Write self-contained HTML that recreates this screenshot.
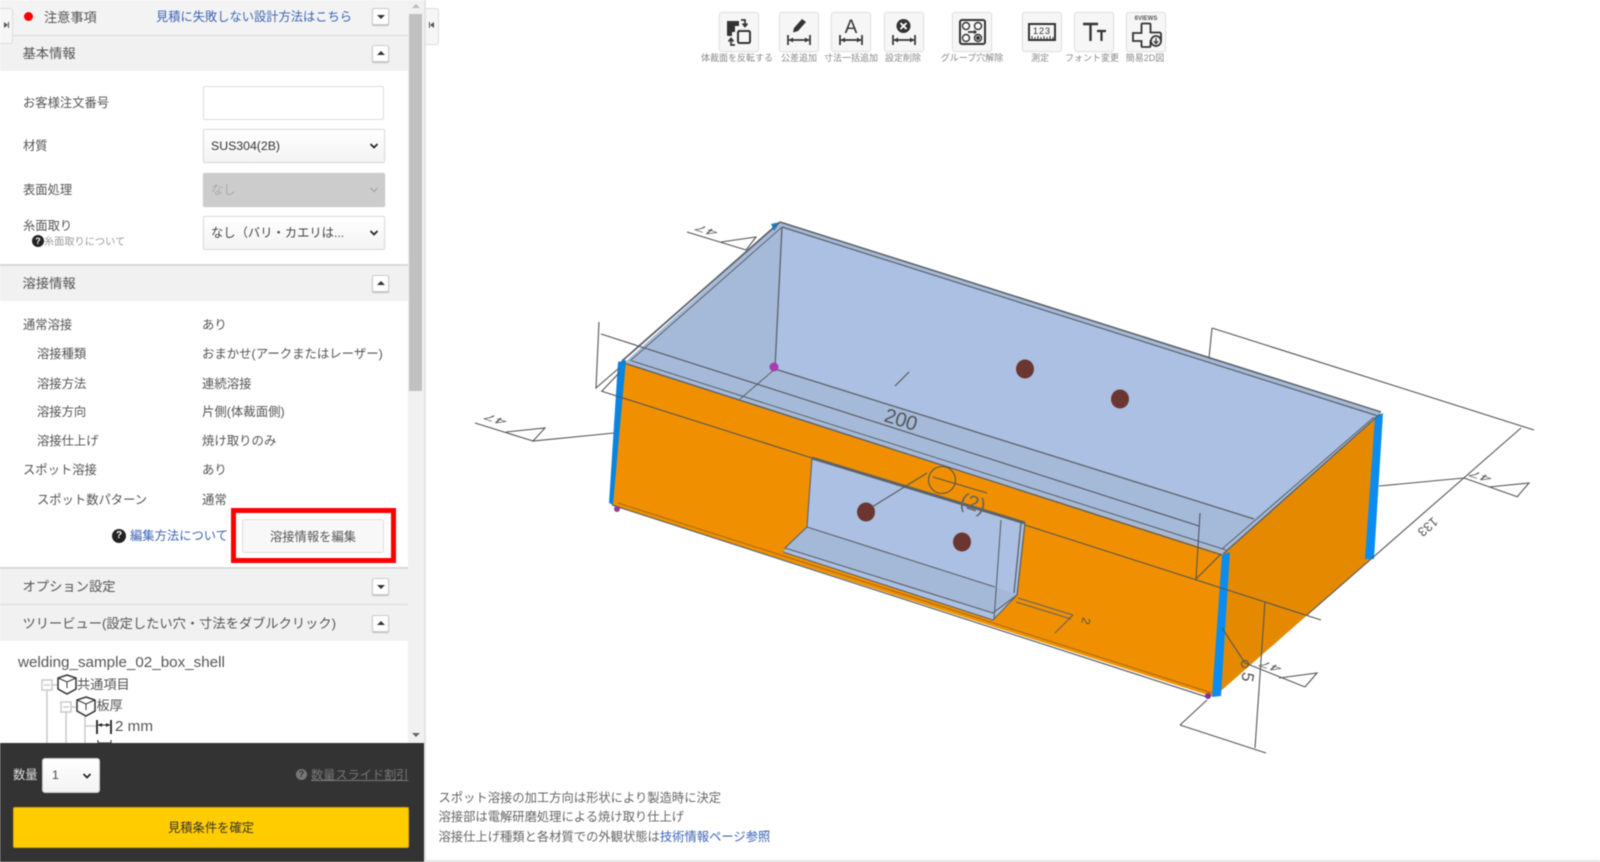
<!DOCTYPE html>
<html lang="ja"><head><meta charset="utf-8"><title>溶接情報</title>
<style>
html,body{margin:0;padding:0;background:#fff;}
#w{position:relative;width:1600px;height:862px;overflow:hidden;background:#fff;filter:blur(.55px);font-family:"Liberation Sans","Noto Sans CJK JP",sans-serif;color:#555;font-size:12.3px;}
#w div,#w a,#w span.a{position:absolute;}
.t{line-height:20px;white-space:nowrap;margin-top:1px;}
.h{font-size:13.3px;color:#555;left:22.500px;}
.bar{left:0;width:408px;background:#f1f1f1;}
.btn{left:372px;width:15px;height:15px;background:#fff;border:1px solid #ccc;border-radius:2px;box-shadow:0 1px 1px #bbb;}
.btn:after{content:"";position:absolute;left:4px;width:0;height:0;border-left:4px solid transparent;border-right:4px solid transparent;}
.up:after{top:5px;border-bottom:4px solid #333;}
.dn:after{top:6px;border-top:4px solid #333;}
.line{left:0;width:408px;height:1px;background:#d8d8d8;}
.sel{left:203px;width:180px;height:32px;border:1px solid #ddd;border-radius:2px;background:linear-gradient(#fff,#f3f3f3);box-shadow:0 0 1px #ccc;line-height:32px;text-indent:7px;color:#444;}
.sel svg{position:absolute;right:5px;top:12px;}
.lb{left:23px;}.lb2{left:37px;}.v{left:202px;font-size:12.4px;}
.tb{top:12px;width:38px;height:38px;background:#f6f6f6;border:1px solid #e2e2e2;border-radius:3px;box-shadow:0 0 1px #ddd;}
.tb svg{position:absolute;left:0;top:0;}
.cap{top:49px;font-size:9px;line-height:18px;color:#888;white-space:nowrap;transform:translateX(-50%);}
.note{left:438.500px;font-size:12.3px;color:#666;}
a{color:#3a62b5;text-decoration:none;}
</style></head><body><div id="w">

<!-- left panel -->
<div style="left:0;top:0;width:424px;height:744px;background:#fff;overflow:hidden">
  <div class="bar" style="top:0;height:35px;background:#f3f3f3"></div>
  <div class="line" style="top:35px"></div>
  <div style="left:24px;top:12px;width:9px;height:9px;border-radius:50%;background:#f00"></div>
  <div class="t" style="left:44px;top:7px;font-size:13.2px">注意事項</div>
  <a class="t" style="left:156px;top:6px;font-size:12.25px">見積に失敗しない設計方法はこちら</a>
  <div class="btn dn" style="top:8px"></div>

  <div class="bar" style="top:36px;height:35px"></div>
  <div class="t h" style="top:43px">基本情報</div>
  <div class="btn up" style="top:45px"></div>

  <div class="t lb" style="top:92px">お客様注文番号</div>
  <div style="left:203px;top:86px;width:179px;height:32px;border:1px solid #ddd;border-radius:2px;background:#fff"></div>

  <div class="t lb" style="top:135px">材質</div>
  <div class="sel" style="top:129px;font-size:12.3px;color:#333">SUS304(2B)<svg width="10" height="8"><path d="M1.500 2l3.500 3.500 3.500-3.500" fill="none" stroke="#222" stroke-width="1.700"/></svg></div>

  <div class="t lb" style="top:179px">表面処理</div>
  <div class="sel" style="top:173px;background:#ccc;border-color:#ccc;color:#aaa">なし<svg width="10" height="8"><path d="M1.500 2l3.500 3.500 3.500-3.500" fill="none" stroke="#aaa" stroke-width="1.500"/></svg></div>

  <div class="t lb" style="top:215px">糸面取り</div>
  <div style="left:32px;top:235px;width:12px;height:12px;border-radius:50%;background:#222;color:#fff;font:bold 9px/12px 'Liberation Sans';text-align:center">?</div>
  <div class="t" style="left:44px;top:232px;font-size:10.2px;color:#999">糸面取りについて</div>
  <div class="sel" style="top:216px">なし（バリ・カエリは...<svg width="10" height="8"><path d="M1.500 2l3.500 3.500 3.500-3.500" fill="none" stroke="#222" stroke-width="1.700"/></svg></div>

  <div class="line" style="top:264px;height:2px"></div>
  <div class="bar" style="top:266px;height:35px"></div>
  <div class="t h" style="top:273px">溶接情報</div>
  <div class="btn up" style="top:275px"></div>

  <div class="t lb" style="top:314px">通常溶接</div><div class="t v" style="top:314px">あり</div>
  <div class="t lb2" style="top:343px">溶接種類</div><div class="t v" style="top:343px">おまかせ(アークまたはレーザー)</div>
  <div class="t lb2" style="top:373px">溶接方法</div><div class="t v" style="top:373px">連続溶接</div>
  <div class="t lb2" style="top:401px">溶接方向</div><div class="t v" style="top:401px">片側(体裁面側)</div>
  <div class="t lb2" style="top:430px">溶接仕上げ</div><div class="t v" style="top:430px">焼け取りのみ</div>
  <div class="t lb" style="top:459px">スポット溶接</div><div class="t v" style="top:459px">あり</div>
  <div class="t lb2" style="top:489px">スポット数パターン</div><div class="t v" style="top:489px">通常</div>

  <div style="left:112px;top:529px;width:14px;height:14px;border-radius:50%;background:#222;color:#fff;font:bold 10px/14px 'Liberation Sans';text-align:center">?</div>
  <a class="t" style="left:130px;top:525px">編集方法について</a>
  <div style="left:231px;top:508px;width:155px;height:45px;border:5px solid #f00"></div>
  <div class="t" style="left:242px;top:519px;width:140px;height:32px;margin-top:0;line-height:34px;text-align:center;border:1px solid #ddd;border-radius:3px;background:#f8f8f8;color:#555">溶接情報を編集</div>

  <div class="line" style="top:567px;height:2px"></div>
  <div class="bar" style="top:569px;height:35px"></div>
  <div class="t h" style="top:576px">オプション設定</div>
  <div class="btn dn" style="top:578px"></div>
  <div class="line" style="top:604px"></div>
  <div class="bar" style="top:605px;height:36px"></div>
  <div class="t h" style="top:613px;font-size:13.25px">ツリービュー(設定したい穴・寸法をダブルクリック)</div>
  <div class="btn up" style="top:615px"></div>

  <div class="t" style="left:18px;top:652px;font-size:15.2px">welding_sample_02_box_shell</div>
  <svg style="position:absolute;left:0;top:670px" width="130" height="74">
    <g fill="none" stroke="#ccc" stroke-width="1.6">
      <path d="M47 21V74M66 42V74M85 46V74M85 56H97"/>
      <rect x="42" y="10" width="10" height="10" fill="#fff"/><path d="M44 15h6M52 15h6"/>
      <rect x="61" y="32" width="10" height="10" fill="#fff"/><path d="M63 37h6M71 37h6"/>
    </g>
    <g fill="#fff" stroke="#333" stroke-width="1.5">
      <path d="M67 5l9 3v11l-9 5-9-5V8z"/><path d="M58 8l9 4 9-4M67 12v6" fill="none" stroke-width="1"/>
      <path d="M86 27l9 3v11l-9 5-9-5V30z"/><path d="M77 30l9 4 9-4M86 34v6" fill="none" stroke-width="1"/>
    </g>
    <path d="M97 50v14M111 50v14" fill="none" stroke="#222" stroke-width="1.800"/>
    <path d="M97 55h14" fill="none" stroke="#444" stroke-width="1.200"/>
    <path d="M98 55l4-2v4zM110 55l-4-2v4z" fill="#222"/>
    <path d="M98 70v4M111 70v4M98 73h13" fill="none" stroke="#444" stroke-width="1.2"/>
  </svg>
  <div class="t" style="left:77px;top:674px;font-size:13.2px">共通項目</div>
  <div class="t" style="left:96.500px;top:695px;font-size:13.2px">板厚</div>
  <div class="t" style="left:115px;top:716px;font-size:15.200px">2 mm</div>

  <!-- scrollbar -->
  <div style="left:408px;top:0;width:16px;height:744px;background:#f1f1f1"></div>
  <div style="left:409px;top:14px;width:13px;height:377px;background:#c1c1c1"></div>
  <div style="left:412px;top:4px;border-left:4px solid transparent;border-right:4px solid transparent;border-bottom:4px solid #bbb"></div>
  <div style="left:412px;top:733px;border-left:4px solid transparent;border-right:4px solid transparent;border-top:4px solid #666"></div>
</div>
<div style="left:0;top:8px;width:12px;height:34px;background:#f6f6f6;border:1px solid #ddd;border-left:0;border-radius:0 3px 3px 0"></div>
<div style="left:4px;top:22px;width:0;height:0;border-left:4px solid #555;border-top:3px solid transparent;border-bottom:3px solid transparent"></div>
<div style="left:8px;top:22px;width:1px;height:6px;background:#555"></div>

<!-- footer -->
<div style="left:0;top:743px;width:424px;height:119px;background:#333"></div>
<div class="t" style="left:13px;top:764px;color:#ddd">数量</div>
<div style="left:42px;top:758px;width:56px;height:33px;background:linear-gradient(#fff,#f3f3f3);border-radius:3px;border:1px solid #ccc;color:#444;line-height:33px;text-indent:9px">1<svg style="position:absolute;right:7px;top:13px" width="10" height="8"><path d="M1.500 2l3.500 3.500 3.500-3.500" fill="none" stroke="#222" stroke-width="1.700"/></svg></div>
<div style="left:296px;top:769px;width:11px;height:11px;border-radius:50%;background:#777;color:#333;font:bold 9px/11px 'Liberation Sans';text-align:center">?</div>
<div class="t" style="left:311px;top:764px;color:#777;text-decoration:underline;font-size:12.2px">数量スライド割引</div>
<div style="left:13px;top:807px;width:396px;height:41px;background:#fc0;border:1px solid #d8ad00;box-sizing:border-box;border-radius:2px;text-align:center;line-height:40px;color:#333;font-size:12.3px">見積条件を確定</div>

<!-- viewer border -->
<div style="left:424px;top:0;width:2px;height:862px;background:#e4e4e4"></div>
<div style="left:426px;top:8px;width:12px;height:35px;background:#f6f6f6;border:1px solid #ddd;border-left:0;border-radius:0 3px 3px 0"></div>
<div style="left:429px;top:22px;width:1px;height:6px;background:#555"></div>
<div style="left:430px;top:22px;width:0;height:0;border-right:4px solid #555;border-top:3px solid transparent;border-bottom:3px solid transparent"></div>
<div style="left:426px;top:860px;width:1174px;height:2px;background:#e4e4e4"></div>

<!-- toolbar -->
<div class="tb" style="left:719px"><svg width="38" height="38"><path d="M7 8h12v5h-4v6h-3v4H8a1 1 0 0 1-1-1z" fill="#333"/><rect x="18" y="18" width="12" height="12" rx="1.500" fill="#f6f6f6" stroke="#333" stroke-width="2"/><path d="M21 7h4v6m-2.500-2.500l2.500 3 2.500-3M15 32h-4v-6m-2.500 2.500l2.500-3 2.500 3" fill="none" stroke="#333" stroke-width="1.700"/></svg></div>
<div class="tb" style="left:779px"><svg width="38" height="38"><path d="M14 15l8-9 4 3-8 9-5 1.500z" fill="#333"/><path d="M8 22v10M30 22v10M9 27h20" fill="none" stroke="#333" stroke-width="1.700"/><path d="M9 27l4-2.500v5zM29 27l-4-2.500v5z" fill="#333"/></svg></div>
<div class="tb" style="left:831px"><svg width="38" height="38"><text x="19" y="20" text-anchor="middle" font-family="Liberation Sans" font-size="19" fill="#333">A</text><path d="M8 22v10M30 22v10M9 27h20" fill="none" stroke="#333" stroke-width="1.700"/><path d="M9 27l4-2.500v5zM29 27l-4-2.500v5z" fill="#333"/></svg></div>
<div class="tb" style="left:884px"><svg width="38" height="38"><circle cx="18.500" cy="13" r="7" fill="#333"/><path d="M15.500 10l6 6M21.500 10l-6 6" stroke="#fff" stroke-width="1.900"/><path d="M8 22v10M30 22v10M9 27h20" fill="none" stroke="#333" stroke-width="1.700"/><path d="M9 27l4-2.500v5zM29 27l-4-2.500v5z" fill="#333"/></svg></div>
<div class="tb" style="left:952px"><svg width="38" height="38"><rect x="7" y="7" width="25" height="24" rx="2" fill="none" stroke="#333" stroke-width="2"/><g fill="none" stroke="#333" stroke-width="1.400"><circle cx="13" cy="13" r="3.500"/><circle cx="25" cy="13" r="3.500"/><circle cx="13" cy="25" r="3.500"/><circle cx="25" cy="25" r="3.500"/></g><path d="M15 19h7" stroke="#333" stroke-width="1.800"/><path d="M24 19l-3-2.500v5z" fill="#333"/><circle cx="25" cy="25" r="2" fill="#333"/></svg></div>
<div class="tb" style="left:1022px"><svg width="38" height="38"><rect x="6" y="11" width="26" height="16" fill="none" stroke="#333" stroke-width="2"/><text x="19" y="21" text-anchor="middle" font-family="Liberation Sans" font-size="9" letter-spacing="1" fill="#333">123</text><path d="M9 27v-4M12 27v-3M15 27v-4M18 27v-3M21 27v-4M24 27v-3M27 27v-4M30 27v-3" stroke="#333" stroke-width="1"/></svg></div>
<div class="tb" style="left:1074px"><svg width="38" height="38"><path d="M8 11h15M15.500 11v17" stroke="#333" stroke-width="2.400" fill="none"/><path d="M22 18h9M26.500 18v10" stroke="#333" stroke-width="2.200" fill="none"/></svg></div>
<div class="tb" style="left:1126px"><svg width="38" height="38"><text x="19" y="7" text-anchor="middle" font-family="Liberation Sans" font-size="6" font-weight="bold" fill="#555">6VIEWS</text><path d="M14.500 11.500a1 1 0 0 1 1-1h7a1 1 0 0 1 1 1v8h9a1.500 1.500 0 0 1 1.500 1.500v7H23.500v5a1 1 0 0 1-1 1h-7a1 1 0 0 1-1-1v-5H6v-8h8.500z" fill="none" stroke="#333" stroke-width="1.800"/><circle cx="29" cy="28" r="5" fill="#f6f6f6" stroke="#333" stroke-width="1.700"/><path d="M29 25v5.500M26.800 28l2.200 2.700 2.200-2.700" fill="none" stroke="#333" stroke-width="1.200"/></svg></div>
<div class="cap" style="left:737px">体裁面を反転する</div>
<div class="cap" style="left:799px">公差追加</div>
<div class="cap" style="left:851px">寸法一括追加</div>
<div class="cap" style="left:903px">設定削除</div>
<div class="cap" style="left:972px">グループ穴解除</div>
<div class="cap" style="left:1040px">測定</div>
<div class="cap" style="left:1092px">フォント変更</div>
<div class="cap" style="left:1145px">簡易2D図</div>

<!-- 3D model -->
<svg style="position:absolute;left:0;top:0" width="1600" height="862" viewBox="0 0 1600 862">
  <!-- faces -->
  <polygon points="624,363 1223,554 1214,697 612,505" fill="#f09000"/>
  <polygon points="1223,554 1381,414 1370,560 1214,697" fill="#e58a00"/>
  <polygon points="780,222 1381,413 1223,554 624,363" fill="#a5b9d9"/>
  <polygon points="782,227 1377,416 1254,519 774,368" fill="#abc0e2"/>
  <!-- blue edges -->
  <polygon points="618,362 626,360 613,505 609,503" fill="#0a84e0"/>
  <polygon points="771,224 780,222 774,231" fill="#0a84e0"/>
  <polygon points="1375,417 1383,413 1374,559 1365,559" fill="#0a8cf0"/>
  <polygon points="1222,555 1230,552 1221,696 1212,697" fill="#0a8cf0"/>
  <!-- rims -->
  <g fill="none" stroke="#5c6268">
    <path d="M780,222L1381,412" stroke-width="1.600"/>
    <path d="M782,227L1378,416" stroke-width="1.200"/>
    <path d="M780,222L622,361" stroke-width="1.800"/>
    <path d="M782,227L630,361" stroke-width="1"/>
    <path d="M624,363L1222,555" stroke-width="1.400"/>
    <path d="M632,361L1226,550" stroke-width="1"/>
    <path d="M1380,414L1223,554" stroke-width="1.400"/>
    <path d="M1374,417L1222,549" stroke-width="1"/>
    <path d="M782,227L775,368" stroke-width="1.300"/>
    <path d="M775,369L1254,519" stroke-width="1.300"/>
    <path d="M775,369L740,399" stroke-width="1"/>
    <path d="M612,505L1207,697" stroke-width="1.200"/>
    <path d="M618,503L1212,693" stroke="#a86a10" stroke-width="1"/>
  </g>
  <circle cx="774" cy="367" r="4.500" fill="#a83cb0"/>
  <circle cx="617" cy="509" r="3" fill="#90409a"/>
  <circle cx="1208" cy="696" r="3" fill="#80309a"/>
  <!-- holes -->
  <g fill="#6b3630"><ellipse cx="1025" cy="369" rx="9" ry="9.500"/><ellipse cx="1120" cy="399" rx="9" ry="9.500"/></g>
  <!-- dimension lines -->
  <g fill="none" stroke="#555" stroke-width="1.100">
    <path d="M599,322L596,388L619,368M601,334L1199,526M1200,513L1196,579L1221,554"/>
    <path d="M602,391L619,373M601,391L812,458M1025,525L1321,620"/>
    <path d="M909,372L895,386"/>
    <path d="M1212,328L1209,358M1212,328L1534,430M1521,428L1307,615"/>
    <path d="M1180,725L1207,700M1180,725L1266,753M1265,602L1255,748"/>
    <!-- weld symbols -->
    <path d="M687,232L746,250M721,242L756,237L746,250"/>
    <path d="M475,423L533,441M506,432L545,428L533,441L614,433"/>
    <path d="M1464,478L1518,497M1489,487L1529,483L1517,497M1379,486L1464,478"/>
    <path d="M1245,663L1305,687M1279,678L1317,673L1305,687M1222,628L1245,663"/>
    <circle cx="1245" cy="664" r="3.500"/>
  </g>
  <!-- bracket -->
  <polygon points="812,458 1025,523 1017,595 993,620 783,552 807,527" fill="#abc0e2"/>
  <polygon points="807,527 995,587 1017,595 993,613 785,548" fill="#a4b8d8"/>
  <g fill="none" stroke="#5c6268">
    <path d="M812,458L1025,523" stroke-width="3"/>
    <path d="M812,458L807,527L995,587M807,527L785,548L993,613L1017,595M783,552L993,620L1017,595M1001,520L994,620" stroke-width="1.100"/>
    <path d="M1025,523L1017,595M1021,523L1014,593" stroke-width="1.300"/>
    <path d="M1018,598L1073,615M1016,602L1071,619M1073,615L1055,633" stroke-width="1"/>
  </g>
  <g fill="#6b3630"><ellipse cx="866" cy="512" rx="9" ry="9.500"/><ellipse cx="962" cy="542" rx="9" ry="9.500"/></g>
  <g fill="none" stroke="#555" stroke-width="1.100">
    <path d="M872,507L927,473M933,477L987,493"/>
    <circle cx="942" cy="480" r="13.500"/>
  </g>
  <!-- labels -->
  <g font-family="Liberation Sans" fill="#555">
    <text transform="translate(899,426) rotate(17.500)" text-anchor="middle" font-size="20">200</text>
    <text transform="translate(971,510) rotate(17)" text-anchor="middle" font-size="21" fill="#666">(2)</text>
    <text transform="matrix(-1.520 -.5 .67 -.6 709 228)" text-anchor="middle" font-size="12">47</text>
    <text transform="matrix(-1.520 -.5 .67 -.6 498 417)" text-anchor="middle" font-size="12">47</text>
    <text transform="matrix(-1.520 -.5 .67 -.6 1483 474)" text-anchor="middle" font-size="12">47</text>
    <text transform="matrix(-1.520 -.5 .67 -.6 1273 664)" text-anchor="middle" font-size="12">47</text>
    <text transform="translate(1425,523.500) rotate(139)" text-anchor="middle" font-size="13">133</text>
    <text transform="translate(1242,676) rotate(100)" text-anchor="middle" font-size="17">5</text>
    <text transform="translate(1082,620) rotate(105)" text-anchor="middle" font-size="12">2</text>
  </g>
</svg>

<!-- notes -->
<div class="t note" style="top:787px">スポット溶接の加工方向は形状により製造時に決定</div>
<div class="t note" style="top:806px">溶接部は電解研磨処理による焼け取り仕上げ</div>
<div class="t note" style="top:826px">溶接仕上げ種類と各材質での外観状態は<span style="color:#3a62b5">技術情報ページ参照</span></div>

</div></body></html>
